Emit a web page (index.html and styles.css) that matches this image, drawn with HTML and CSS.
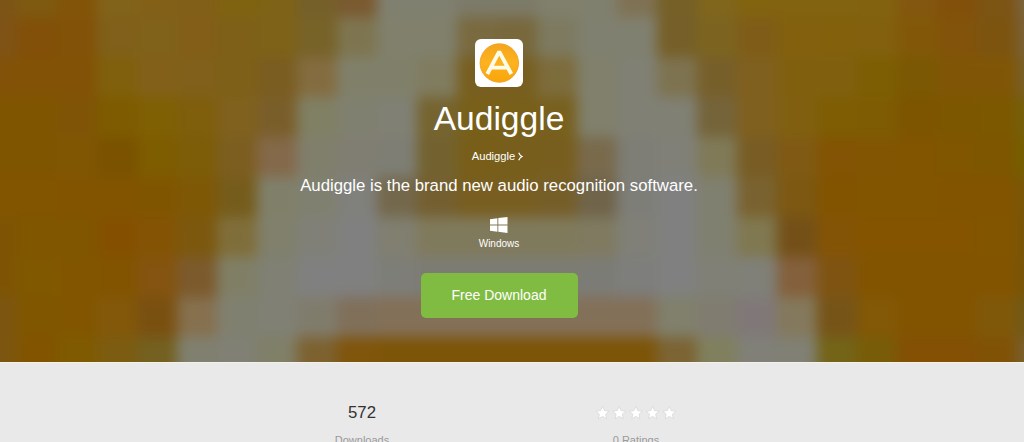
FILE: index.html
```html
<!DOCTYPE html>
<html lang="en">
<head>
<meta charset="utf-8">
<title>Audiggle</title>
<link rel="stylesheet" href="styles.css">
</head>
<body>
<header class="hero">
  <svg class="mosaic" viewBox="0 0 1024 362" aria-hidden="true">
    <filter id="soft" x="-5%" y="-5%" width="110%" height="110%" color-interpolation-filters="sRGB"><feGaussianBlur stdDeviation="6.5"/></filter>
    <g id="cells" filter="url(#soft)"></g>
  </svg>
  <div class="intro">
    <svg class="logo" viewBox="0 0 48 48" role="img" aria-label="Audiggle">
      <defs><linearGradient id="gold" x1="0" y1="0" x2="0" y2="1"><stop offset="0" stop-color="#f4a51c"/><stop offset=".5" stop-color="#fdb21f"/><stop offset="1" stop-color="#f8a509"/></linearGradient></defs>
      <rect width="48" height="48" rx="6" fill="#fff"/>
      <circle cx="24.3" cy="24" r="19.2" fill="url(#gold)" stroke="#f2a32c"/>
      <path d="M12.3 35 24.2 12.6 36.3 35M17 28.6H31.7" fill="none" stroke="#fffbe9" stroke-width="3.9" stroke-linejoin="bevel"/>
    </svg>
    <h1 class="title">Audiggle</h1>
    <a class="vendor">Audiggle<svg class="chevron" viewBox="0 0 5 9"><path d="M.7.7Q2 3.6 4 4.5 2 5.4.7 8.3"/></svg></a>
    <p class="summary">Audiggle is the brand new audio recognition software.</p>
    <div class="platform">
      <svg class="windows" viewBox="0 0 18 16"><path d="M0 2.3 7.4 1.2V7.5H0ZM8.3 1.1 17.5 0V7.5H8.3ZM0 8.4H7.4V14.7L0 13.7ZM8.3 8.4H17.5V16L8.3 14.8Z"/></svg>
      <span>Windows</span>
    </div>
    <a class="download">Free Download</a>
  </div>
</header>
<section class="stats">
  <div class="stat"><strong class="count">572</strong><span class="label">Downloads</span></div>
  <div class="stat">
    <svg class="stars" viewBox="0 0 84 18">
      <defs><path id="star" d="M8.5 2.3 10.4 6.6 15 7.1 11.6 10.2 12.6 14.7 8.5 12.4 4.4 14.7 5.4 10.2 2 7.1 6.6 6.6Z"/></defs>
      <use href="#star"/><use href="#star" x="16.7"/><use href="#star" x="33.4"/><use href="#star" x="50.1"/><use href="#star" x="66.8"/>
    </svg>
    <span class="label">0 Ratings</span>
  </div>
</section>
<script src="mosaic.js"></script>
</body>
</html>
```
FILE: styles.css
```css
body {
  margin: 0;
  height: 442px;
  overflow: hidden;
  background: #e9e9e9;
  font-family: "Liberation Sans", Arial, sans-serif;
}
.hero {
  position: relative;
  height: 362px;
  box-sizing: border-box;
  padding: 39px 26px 0 0;
  overflow: hidden;
  background: #7d6a3a;
  color: #fff;
}
.mosaic {
  position: absolute;
  top: 0;
  left: 0;
  width: 1024px;
  height: 362px;
}
.intro {
  position: relative;
  display: flex;
  flex-direction: column;
  align-items: center;
}
.logo { width: 48px; height: 48px; }
.title { margin: 12px 0 0; font-size: 33.6px; line-height: 40px; font-weight: 400; }
.vendor {
  display: flex;
  align-items: center;
  gap: 3px;
  margin: 9px 3px 0 0;
  font-size: 11.2px;
  line-height: 16px;
}
.chevron { width: 5px; height: 9px; fill: none; stroke: #fff; stroke-width: 1.2; }
.summary { margin: 11px 0 0; font-size: 16.75px; line-height: 22px; }
.platform {
  display: flex;
  flex-direction: column;
  align-items: center;
  gap: 4px;
  margin-top: 20px;
  font-size: 10px;
  line-height: 12px;
}
.platform span { padding-top: 1px; }
.windows { width: 18px; height: 16px; fill: #fff; }
.download {
  width: 157px;
  margin: 23px 0 0;
  border-radius: 5px;
  background: #81bc42;
  text-align: center;
  font-size: 14px;
  line-height: 45px;
}
.stats {
  display: flex;
  justify-content: center;
  padding: 40px 26px 0 0;
  border-top: 1px solid #f5f1e6;
}
.stat {
  display: flex;
  flex-direction: column;
  align-items: center;
  width: 274px;
}
.count { height: 31px; color: #333; font-size: 16.8px; line-height: 20px; font-weight: 400; }
.stars { width: 84px; height: 18px; margin: 1px 0 12px; fill: #fff; stroke: #d4d4d4; stroke-width: .7; }
.label { color: #999; font-size: 11px; line-height: 13px; }
```
FILE: mosaic.js
```javascript
// Each row lists its tile colours from left to right; tiles are 40px squares.
const rows = [
  "7c5416 7e5a10 825408 82631a 826018 825f18 7f6310 7e6216 75602a 7b5a30 808070 808070 7c7a68 7c7a68 80806c 80806e 7f7254 766028 80651c 82630f 82630f 82630f 82620f 83570f 82500a 7c5414 7a6440",
  "7f5316 825008 825208 80601a 80621a 825e18 7e6018 7e6218 776228 7e7550 80806c 80806c 7a6a40 78683c 7d7a60 808070 808070 765f28 7c6420 7f5d18 82600e 82600c 82600e 825808 82530a 7c5410 7a6238",
  "825208 825206 825206 80600c 82601a 80601a 7f6018 7a5d20 846c40 80806a 80806a 807c60 785f20 785f20 7d6c3c 80806c 808074 7e7350 775f2a 80601f 80600f 80600f 7d5e03 7b5803 805606 805606 776028",
  "805500 805500 805406 7e5b00 7f6003 7f5e0c 80611e 7a5e2a 808064 808070 808074 766430 78601a 78601a 78601e 80806c 808074 808074 75643a 80601f 806010 7e5d03 7e5c03 7d5400 7d5600 7c5800 74600c",
  "805500 805500 805603 7a5200 7e5c00 7d5d08 7c5e20 84694a 807f6c 807e72 7e7e74 736230 785e18 785e1c 785e1e 796a4c 7e7e76 808078 807a58 785c24 805a14 825403 825503 825500 805600 7e5600 746000",
  "825500 825500 825400 825400 805500 7f5806 765c1c 80806a 808070 80807c 74684c 745f30 785e20 785e20 765e28 70644a 7e7e78 808080 808070 7a6230 7c5812 825400 825500 825500 825400 825400 785608",
  "7e5404 805600 805600 845000 845404 7c580e 806e3a 80806c 808078 808080 807f70 807a5c 807a5c 807a5c 807a5c 7f7a60 808078 808080 808070 807850 745018 845406 845400 845400 845400 825500 785408",
  "7e5404 805800 825600 825400 845410 7c5a2c 807f66 808074 808080 808080 7e7e78 7c7c74 7c7c74 7c7c74 7c7c74 7c7c76 7e7e7c 808080 808076 808078 84603c 7f5412 825400 825400 825400 825400 785408",
  "7c5610 805600 825600 83580a 7a5010 86704e 808070 808074 807c6c 80705a 837058 837058 837058 837058 837058 837058 837058 80806c 807c70 807878 84795c 765418 835806 825400 825400 80580a 705a18",
  "7c5610 825400 7f5a00 7c5c10 746020 808070 808074 807f68 7d6230 80550c 7d5508 7d5508 7d5508 7d5508 7d5508 7d5508 7d5508 7c6434 80805e 808078 808074 746418 785c08 835004 835004 805206 786030"
];
const layer = document.getElementById("cells");
rows.forEach((row, r) => {
  row.split(" ").forEach((colour, c) => {
    const tile = document.createElementNS("http://www.w3.org/2000/svg", "rect");
    tile.setAttribute("x", c * 40 - 23);
    tile.setAttribute("y", r * 40 - 23);
    tile.setAttribute("width", 41);
    tile.setAttribute("height", r === rows.length - 1 ? 70 : 41);
    tile.setAttribute("fill", "#" + colour);
    layer.appendChild(tile);
  });
});
```
